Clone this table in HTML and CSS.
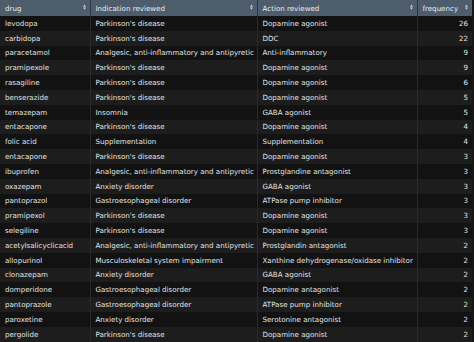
FILE: index.html
```html
<!DOCTYPE html>
<html lang="en">
<head>
    <meta charset="UTF-8">
    <title>Reviewed drugs</title>
    <link rel="stylesheet" href="styles.css">
</head>
<body>
<table class="grid">
    <colgroup>
        <col class="c-drug">
        <col class="c-ind">
        <col class="c-act">
        <col class="c-freq">
    </colgroup>
    <thead>
    <tr>
        <th><span>drug</span><svg class="sort" viewBox="0 0 4 7"><path d="M0 3 2 0 4 3ZM0 4 2 7 4 4Z"/></svg></th>
        <th><span>Indication reviewed</span><svg class="sort" viewBox="0 0 4 7"><path d="M0 3 2 0 4 3ZM0 4 2 7 4 4Z"/></svg></th>
        <th><span>Action reviewed</span><svg class="sort" viewBox="0 0 4 7"><path d="M0 3 2 0 4 3ZM0 4 2 7 4 4Z"/></svg></th>
        <th><span>frequency</span><svg class="sort" viewBox="0 0 4 7"><path d="M0 3 2 0 4 3ZM0 4 2 7 4 4Z"/></svg></th>
    </tr>
    </thead>
    <tbody>
    <tr><td>levodopa</td><td>Parkinson's disease</td><td>Dopamine agonist</td><td class="num">26</td></tr>
    <tr><td>carbidopa</td><td>Parkinson's disease</td><td>DDC</td><td class="num">22</td></tr>
    <tr><td>paracetamol</td><td>Analgesic, anti-inflammatory and antipyretic</td><td>Anti-inflammatory</td><td class="num">9</td></tr>
    <tr><td>pramipexole</td><td>Parkinson's disease</td><td>Dopamine agonist</td><td class="num">9</td></tr>
    <tr><td>rasagiline</td><td>Parkinson's disease</td><td>Dopamine agonist</td><td class="num">6</td></tr>
    <tr><td>benserazide</td><td>Parkinson's disease</td><td>Dopamine agonist</td><td class="num">5</td></tr>
    <tr><td>temazepam</td><td>Insomnia</td><td>GABA agonist</td><td class="num">5</td></tr>
    <tr><td>entacapone</td><td>Parkinson's disease</td><td>Dopamine agonist</td><td class="num">4</td></tr>
    <tr><td>folic acid</td><td>Supplementation</td><td>Supplementation</td><td class="num">4</td></tr>
    <tr><td>entacapone</td><td>Parkinson's disease</td><td>Dopamine agonist</td><td class="num">3</td></tr>
    <tr><td>ibuprofen</td><td>Analgesic, anti-inflammatory and antipyretic</td><td>Prostglandine antagonist</td><td class="num">3</td></tr>
    <tr><td>oxazepam</td><td>Anxiety disorder</td><td>GABA agonist</td><td class="num">3</td></tr>
    <tr><td>pantoprazol</td><td>Gastroesophageal disorder</td><td>ATPase pump inhibitor</td><td class="num">3</td></tr>
    <tr><td>pramipexol</td><td>Parkinson's disease</td><td>Dopamine agonist</td><td class="num">3</td></tr>
    <tr><td>selegiline</td><td>Parkinson's disease</td><td>Dopamine agonist</td><td class="num">3</td></tr>
    <tr><td>acetylsalicyclicacid</td><td>Analgesic, anti-inflammatory and antipyretic</td><td>Prostglandin antagonist</td><td class="num">2</td></tr>
    <tr><td>allopurinol</td><td>Musculoskeletal system impairment</td><td>Xanthine dehydrogenase/oxidase inhibitor</td><td class="num">2</td></tr>
    <tr><td>clonazepam</td><td>Anxiety disorder</td><td>GABA agonist</td><td class="num">2</td></tr>
    <tr><td>domperidone</td><td>Gastroesophageal disorder</td><td>Dopamine antagonist</td><td class="num">2</td></tr>
    <tr><td>pantoprazole</td><td>Gastroesophageal disorder</td><td>ATPase pump inhibitor</td><td class="num">2</td></tr>
    <tr><td>paroxetine</td><td>Anxiety disorder</td><td>Serotonine antagonist</td><td class="num">2</td></tr>
    <tr><td>pergolide</td><td>Parkinson's disease</td><td>Dopamine agonist</td><td class="num">2</td></tr>
    </tbody>
</table>
</body>
</html>
```
FILE: styles.css
```css
* {
    box-sizing: border-box;
}

body {
    margin: 0;
    background: #161616;
    font-family: "DejaVu Sans", sans-serif;
    font-size: 7.1px;
    color: #e2e2e2;
    overflow: hidden;
}

.grid {
    width: 472px;
    border-collapse: collapse;
    table-layout: fixed;
}

.c-drug { width: 90px; }
.c-ind { width: 167px; }
.c-act { width: 160px; }
.c-freq { width: 55px; }

th {
    height: 16px;
    padding: 0 4px 0 5px;
    background: #4e5d6b;
    color: #e8ecef;
    font-weight: normal;
    text-align: left;
    border-left: 1px solid #2c3640;
    white-space: nowrap;
}

th:first-child {
    border-left: none;
}

th span {
    display: inline-block;
    vertical-align: middle;
}

.sort {
    float: right;
    width: 3px;
    height: 6px;
    margin-top: 1px;
    fill: #c8d0d8;
}

td {
    height: 14.8px;
    padding: 0 2px 0 5px;
    white-space: nowrap;
    overflow: hidden;
    border-left: 1px solid #2a2a2a;
}

td:first-child {
    border-left: none;
}

tbody tr:nth-child(odd) {
    background: #121212;
}

tbody tr:nth-child(even) {
    background: #1d1d1d;
}

.num {
    text-align: right;
    padding-right: 4px;
}
```
